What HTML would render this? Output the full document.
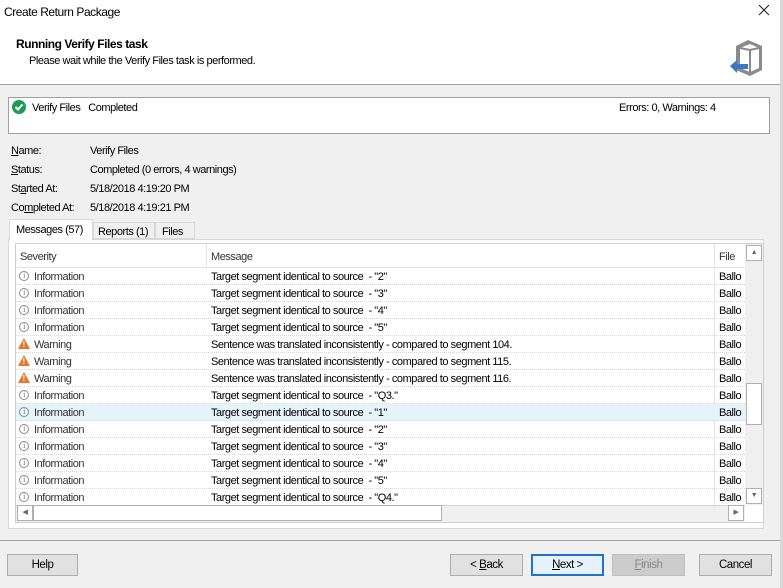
<!DOCTYPE html>
<html><head><style>
*{box-sizing:border-box;margin:0;padding:0}
body{width:783px;height:588px;overflow:hidden;background:#f0f0f0;font-family:"Liberation Sans",sans-serif;font-size:11px;letter-spacing:-0.45px;color:#000;position:relative}
.a{position:absolute;white-space:nowrap}
.btn{position:absolute;top:554px;height:22px;border:1px solid #adadad;background:#e1e1e1;text-align:center;line-height:20px;font-size:11.5px}
.row{position:absolute;left:16px;width:729px;height:17px;border-bottom:1px dotted #d8d8d8}
.row span{position:absolute;top:3px}
.row .s{left:18px;color:#333}.row .m{left:195px}.row .f{left:703px}
.ico{position:absolute;left:3px;top:3px;width:10px;height:10px;border:1px solid #8a8a8a;border-radius:50%;font-size:8px;line-height:8px;text-align:center;color:#777;font-family:"Liberation Serif",serif}
.w{position:absolute;left:2px;top:2px;width:0;height:0;border-left:6px solid transparent;border-right:6px solid transparent;border-bottom:11px solid #e8772e}
.w:after{content:"!";position:absolute;left:-1.5px;top:2px;color:#fff;font-size:8px;font-weight:bold}
</style></head><body>
<div class="a" style="left:0;top:0;width:783px;height:84px;background:#fff"></div>
<div class="a" style="left:0;top:84px;width:783px;height:1px;background:#a0a0a0"></div>
<div class="a" style="left:4px;top:5px;font-size:12px">Create Return Package</div>
<svg class="a" style="left:758px;top:4px" width="12" height="12"><path d="M1 1L11 11M11 1L1 11" stroke="#222" stroke-width="1.1"/></svg>
<div class="a" style="left:16px;top:37px;font-size:12px;font-weight:bold">Running Verify Files task</div>
<div class="a" style="left:29px;top:55px">Please wait while the Verify Files task is performed.</div>
<svg class="a" style="left:726px;top:36px" width="44" height="40" viewBox="0 0 44 40">
<path d="M10 10 L22 4 L36 10 L36 34 L24 40 L10 34 Z" fill="#8a8a8a"/>
<path d="M14 12 L24 8 L33 12 L33 32 L24 36 L14 32Z" fill="#fff"/>
<path d="M24 14 L33 12 M24 14 L24 36 M24 14 L14 12" stroke="#8a8a8a" stroke-width="2" fill="none"/>
<path d="M4 30 L11 24 L11 28 L22 28 L22 33 L11 33 L11 37 Z" fill="#3a78c2"/>
</svg>
<div class="a" style="left:8px;top:97px;width:762px;height:37px;background:#fff;border:1px solid #a0a0a0"></div>
<svg class="a" style="left:12px;top:100px" width="14" height="14"><circle cx="7" cy="7" r="7" fill="#1e9a55"/><path d="M3.5 7 L6 9.5 L10.5 4.5" stroke="#fff" stroke-width="2" fill="none"/></svg>
<div class="a" style="left:32px;top:102px">Verify Files&nbsp;&nbsp; Completed</div>
<div class="a" style="left:619px;top:102px">Errors: 0, Warnings: 4</div>
<div class="a" style="left:11px;top:145px"><u>N</u>ame:</div><div class="a" style="left:90px;top:145px">Verify Files</div>
<div class="a" style="left:11px;top:164px"><u>S</u>tatus:</div><div class="a" style="left:90px;top:164px">Completed (0 errors, 4 warnings)</div>
<div class="a" style="left:11px;top:183px">St<u>a</u>rted At:</div><div class="a" style="left:90px;top:183px">5/18/2018 4:19:20 PM</div>
<div class="a" style="left:11px;top:202px">Co<u>m</u>pleted At:</div><div class="a" style="left:90px;top:202px">5/18/2018 4:19:21 PM</div>
<div class="a" style="left:8px;top:239px;width:756px;height:290px;background:#fff;border:1px solid #d9d9d9"></div>
<div class="a" style="left:9px;top:219px;width:84px;height:21px;background:#fff;border:1px solid #d9d9d9;border-bottom:none;padding:4px 0 0 6px">Messages (57)</div>
<div class="a" style="left:93px;top:222px;width:62px;height:17px;background:#f0f0f0;border:1px solid #d9d9d9;padding:3px 0 0 4px">Reports (1)</div>
<div class="a" style="left:155px;top:222px;width:40px;height:17px;background:#f0f0f0;border:1px solid #d9d9d9;padding:3px 0 0 6px">Files</div>
<div class="a" style="left:15px;top:243px;width:749px;height:280px;border:1px solid #d0d0d0;background:#fff"></div>
<div class="a" style="left:16px;top:244px;width:729px;height:24px;border-bottom:1px solid #e5e5e5"></div>
<div class="a" style="left:206px;top:244px;width:1px;height:24px;background:#e5e5e5"></div>
<div class="a" style="left:714px;top:244px;width:1px;height:261px;background:#e5e5e5"></div>
<div class="a" style="left:20px;top:251px;color:#333">Severity</div>
<div class="a" style="left:211px;top:251px;color:#333">Message</div>
<div class="a" style="left:719px;top:251px;color:#333">File</div>
<div class="a" style="left:745px;top:244px;width:18px;height:261px;background:#f0f0f0"></div>
<div class="a" style="left:746px;top:245px;width:16px;height:16px;border:1px solid #b0b0b0;background:#fff;font-size:7px;text-align:center;line-height:14px;color:#666">▲</div>
<div class="a" style="left:746px;top:383px;width:16px;height:42px;border:1px solid #b0b0b0;background:#fff"></div>
<div class="a" style="left:746px;top:488px;width:16px;height:16px;border:1px solid #b0b0b0;background:#fff;font-size:7px;text-align:center;line-height:14px;color:#666">▼</div>
<div id="rows"></div>
<div class="a" style="left:16px;top:505px;width:729px;height:17px;background:#f0f0f0;border-top:1px solid #d0d0d0"></div>
<div class="a" style="left:17px;top:505px;width:16px;height:16px;border:1px solid #b0b0b0;background:#fff;font-size:7px;text-align:center;line-height:14px;color:#666">◀</div>
<div class="a" style="left:33px;top:505px;width:409px;height:16px;border:1px solid #b0b0b0;background:#fff"></div>
<div class="a" style="left:728px;top:505px;width:16px;height:16px;border:1px solid #b0b0b0;background:#fff;font-size:7px;text-align:center;line-height:14px;color:#666">▶</div>
<div class="a" style="left:0;top:540px;width:783px;height:1px;background:#a0a0a0"></div>
<div class="btn" style="left:7px;width:71px">Help</div>
<div class="btn" style="left:450px;width:73px">&lt; <u>B</u>ack</div>
<div class="btn" style="left:531px;width:73px;border:2px solid #1e74c8;background:#e5f1fb;line-height:18px"><u>N</u>ext &gt;</div>
<div class="btn" style="left:612px;width:73px;border-color:#bfbfbf;background:#ccc;color:#888"><u>F</u>inish</div>
<div class="btn" style="left:699px;width:73px">Cancel</div>
<div class="a" style="left:780px;top:0;width:3px;height:588px;background:#d8d8d8"></div>
<script>
var d=[["i",'"2"'],["i",'"3"'],["i",'"4"'],["i",'"5"'],["w","104."],["w","115."],["w","116."],["i",'"Q3."'],["i",'"1"'],["i",'"2"'],["i",'"3"'],["i",'"4"'],["i",'"5"'],["i",'"Q4."']];
var h="";d.forEach(function(r,k){var y=268+k*17;var sel=k==8?"background:#e5f3fb;":"";
h+='<div class="row" style="top:'+y+'px;'+sel+'">'+(r[0]=="i"?'<div class="ico">i</div><span class="s">Information</span><span class="m">Target segment identical to source&nbsp; - '+r[1]+'</span>':'<div class="w"></div><span class="s">Warning</span><span class="m">Sentence was translated inconsistently - compared to segment '+r[1]+'</span>')+'<span class="f">Ballo</span></div>';});
document.getElementById("rows").innerHTML=h;
</script>
</body></html>
